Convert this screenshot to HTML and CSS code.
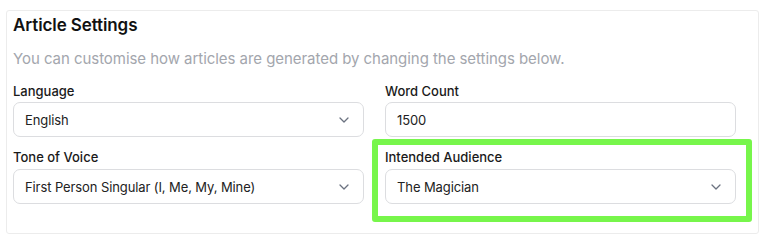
FILE: index.html
```html
<!DOCTYPE html>
<html>
<head>
<meta charset="utf-8">
<link rel="stylesheet" href="styles.css">
</head>
<body>
<section class="card">
  <h2 class="title">Article Settings</h2>
  <p class="subtitle">You can customise how articles are generated by changing the settings below.</p>
  <div class="grid">
    <div class="field field-r1">
      <label class="label">Language</label>
      <div class="control">
        <span>English</span>
        <svg class="chev" width="10" height="6" viewBox="0 0 10 6"><path d="M1 1l4 4 4-4" fill="none" stroke="#6b7280" stroke-width="1.3" stroke-linecap="round" stroke-linejoin="round"/></svg>
      </div>
    </div>
    <div class="field field-r1">
      <label class="label">Word Count</label>
      <div class="control"><span>1500</span></div>
    </div>
    <div class="field field-r2">
      <label class="label">Tone of Voice</label>
      <div class="control">
        <span>First Person Singular (I, Me, My, Mine)</span>
        <svg class="chev" width="10" height="6" viewBox="0 0 10 6"><path d="M1 1l4 4 4-4" fill="none" stroke="#6b7280" stroke-width="1.3" stroke-linecap="round" stroke-linejoin="round"/></svg>
      </div>
    </div>
    <div class="field field-r2">
      <label class="label">Intended Audience</label>
      <div class="control">
        <span>The Magician</span>
        <svg class="chev" width="10" height="6" viewBox="0 0 10 6"><path d="M1 1l4 4 4-4" fill="none" stroke="#6b7280" stroke-width="1.3" stroke-linecap="round" stroke-linejoin="round"/></svg>
      </div>
    </div>
  </div>
  <div class="highlight"></div>
</section>
</body>
</html>
```

FILE: styles.css
```css
* { box-sizing: border-box; }
html, body { margin: 0; padding: 0; background: #ffffff; }
body {
  font-family: Inter, "Noto Sans", "Liberation Sans", sans-serif;
  color: #1f1f1f;
}
.card {
  position: relative;
  margin: 10px 0 0 6px;
  width: 753px;
  height: 224px;
  border: 1.5px solid #ececec;
  border-radius: 3px;
  padding: 3px 0 0 6px;
}
.title {
  margin: 0;
  font-size: 17px;
  line-height: 22px;
  font-weight: 600;
  color: #111;
  letter-spacing: -0.1px;
}
.subtitle {
  margin: 12px 0 0 0;
  font-size: 15px;
  line-height: 22px;
  color: #a3a6ad;
  letter-spacing: -0.05px;
}
.grid {
  margin-top: 11px;
  display: grid;
  grid-template-columns: 351px 351px;
  column-gap: 21px;
  row-gap: 10px;
}
.field { display: flex; flex-direction: column; }
.field-r1 { gap: 1px; }
.field-r2 { gap: 2px; }
.label {
  font-size: 13px;
  line-height: 20px;
  font-weight: 500;
  color: #1a1a1a;
}
.control {
  height: 35px;
  border: 1px solid #dcdde0;
  border-radius: 7px;
  display: flex;
  align-items: center;
  justify-content: space-between;
  padding: 0 13px 0 11px;
  font-size: 13px;
  letter-spacing: -0.1px;
  color: #222;
}
.chev { flex: none; margin-right: 1px; }
.highlight {
  position: absolute;
  left: 364.5px;
  top: 127.5px;
  width: 380px;
  height: 83px;
  border: 6px solid #77f64b;
  border-radius: 3px;
}
```
